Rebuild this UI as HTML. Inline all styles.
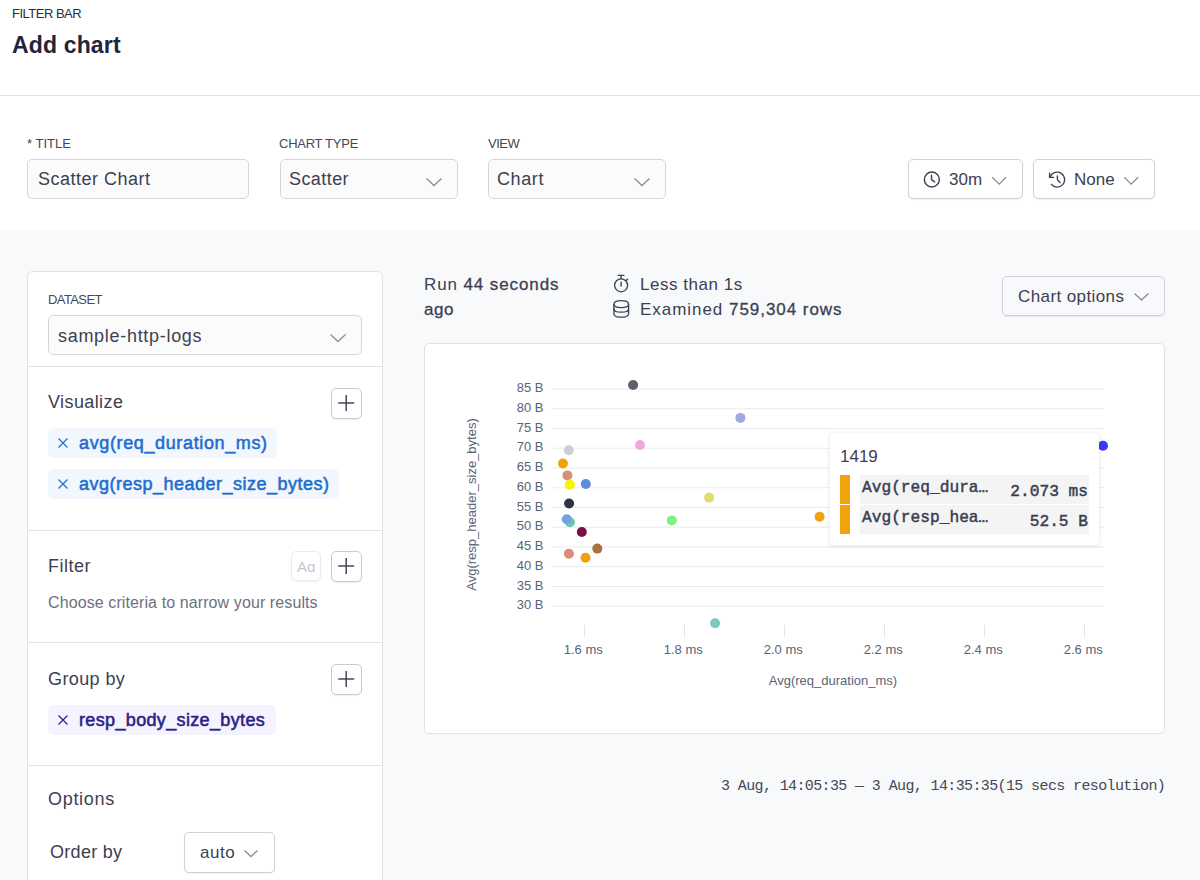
<!DOCTYPE html>
<html><head><meta charset="utf-8">
<style>
html,body{margin:0;padding:0;}
body{width:1200px;height:880px;overflow:hidden;position:relative;background:#fff;font-family:"Liberation Sans",sans-serif;color:#3d4051;}
.t{position:absolute;white-space:pre;line-height:1;}
.box{position:absolute;box-sizing:border-box;}
.inp{position:absolute;box-sizing:border-box;border:1px solid #d6d7dd;border-radius:5px;background:#fbfbfc;}
.btn{position:absolute;box-sizing:border-box;border:1px solid #cfd0d8;border-radius:5px;background:#fff;box-shadow:0 1px 1px rgba(20,20,40,0.06);}
.div{position:absolute;left:0;right:0;height:1px;background:#e3e4e8;}
.chev{position:absolute;}
.mono{font-family:"Liberation Mono",monospace;}
</style></head><body>

<!-- header -->
<div class="t" style="left:12px;top:7px;font-size:13px;letter-spacing:-0.5px;color:#2b2d3b;">FILTER BAR</div>
<div class="t" style="left:12px;top:34px;font-size:23px;font-weight:700;letter-spacing:0.15px;color:#22243a;">Add chart</div>
<div class="box" style="left:0;top:95px;width:1200px;height:1px;background:#e0e1e5;"></div>

<!-- form -->
<div class="t" style="left:27px;top:137px;font-size:13px;color:#454857;">* TITLE</div>
<div class="t" style="left:279px;top:137px;font-size:13px;letter-spacing:-0.26px;color:#454857;">CHART TYPE</div>
<div class="t" style="left:488px;top:137px;font-size:13px;letter-spacing:-0.5px;color:#454857;">VIEW</div>

<div class="inp" style="left:27px;top:159px;width:222px;height:40px;"></div>
<div class="t" style="left:38px;top:170px;font-size:18px;letter-spacing:0.5px;color:#3d4051;">Scatter Chart</div>

<div class="inp" style="left:280px;top:159px;width:178px;height:40px;"></div>
<div class="t" style="left:289px;top:170px;font-size:18px;letter-spacing:0.43px;color:#3d4051;">Scatter</div>
<svg class="chev" style="left:425px;top:177px" width="18" height="10" viewBox="0 0 18 10"><path d="M1.5 1.5 L9 8.5 L16.5 1.5" fill="none" stroke="#8b8d9b" stroke-width="1.3"/></svg>

<div class="inp" style="left:488px;top:159px;width:178px;height:40px;"></div>
<div class="t" style="left:497px;top:170px;font-size:18px;letter-spacing:0.6px;color:#3d4051;">Chart</div>
<svg class="chev" style="left:633px;top:177px" width="18" height="10" viewBox="0 0 18 10"><path d="M1.5 1.5 L9 8.5 L16.5 1.5" fill="none" stroke="#8b8d9b" stroke-width="1.3"/></svg>

<div class="btn" style="left:908px;top:159px;width:115px;height:40px;"></div>
<div class="t" style="left:949px;top:171px;font-size:17px;color:#3d4051;">30m</div>
<div class="btn" style="left:1033px;top:159px;width:122px;height:40px;"></div>
<div class="t" style="left:1074px;top:171px;font-size:17px;color:#3d4051;">None</div>




<!-- gray area -->
<div class="box" style="left:0;top:230px;width:1200px;height:650px;background:#f8f9fb;"></div>


<!-- left panel -->
<div class="box" style="left:27px;top:271px;width:356px;height:640px;background:#fff;border:1px solid #e1e2e7;border-radius:6px;"></div>
<div class="t" style="left:48px;top:293px;font-size:13px;letter-spacing:-0.6px;color:#454857;">DATASET</div>
<div class="inp" style="left:48px;top:315px;width:314px;height:40px;"></div>
<div class="t" style="left:58px;top:327px;font-size:18px;letter-spacing:0.7px;color:#3d4051;">sample-http-logs</div>
<svg class="chev" style="left:329px;top:333px" width="18" height="10" viewBox="0 0 18 10"><path d="M1.5 1.5 L9 8.5 L16.5 1.5" fill="none" stroke="#8b8d9b" stroke-width="1.3"/></svg>
<div class="box" style="left:28px;top:366px;width:354px;height:1px;background:#e3e4e8;"></div>

<div class="t" style="left:48px;top:393px;font-size:18px;letter-spacing:0.4px;color:#3d4051;">Visualize</div>
<div class="btn" style="left:331px;top:388px;width:31px;height:31px;border-color:#c9cad2;"></div>
<svg class="chev" style="left:331px;top:388px" width="31" height="31" viewBox="0 0 31 31"><path d="M15.2 7 V23 M7.2 15 H23.2" fill="none" stroke="#454858" stroke-width="1.5"/></svg>

<div class="box" style="left:48px;top:428px;width:229px;height:30px;background:#f2f6fd;border-radius:5px;"></div>
<svg class="chev" style="left:57px;top:437px" width="12" height="12" viewBox="0 0 12 12"><path d="M1.5 1.5 L10.5 10.5 M10.5 1.5 L1.5 10.5" fill="none" stroke="#1f6fd0" stroke-width="1.2"/></svg>
<div class="t" style="left:79px;top:434px;font-size:18px;font-weight:400;letter-spacing:0.63px;-webkit-text-stroke:0.55px #1d6ecf;color:#1d6ecf;">avg(req_duration_ms)</div>
<div class="box" style="left:48px;top:469px;width:291px;height:30px;background:#f2f6fd;border-radius:5px;"></div>
<svg class="chev" style="left:57px;top:478px" width="12" height="12" viewBox="0 0 12 12"><path d="M1.5 1.5 L10.5 10.5 M10.5 1.5 L1.5 10.5" fill="none" stroke="#1f6fd0" stroke-width="1.2"/></svg>
<div class="t" style="left:79px;top:475px;font-size:18px;font-weight:400;letter-spacing:0.49px;-webkit-text-stroke:0.55px #1d6ecf;color:#1d6ecf;">avg(resp_header_size_bytes)</div>
<div class="box" style="left:28px;top:530px;width:354px;height:1px;background:#e3e4e8;"></div>

<div class="t" style="left:48px;top:557px;font-size:18px;letter-spacing:0.5px;color:#3d4051;">Filter</div>
<div class="btn" style="left:291px;top:551px;width:30px;height:30px;border-color:#ececf0;"></div>
<div class="t" style="left:297px;top:559px;font-size:15px;color:#c5c7cf;">Aɑ</div>
<div class="btn" style="left:331px;top:551px;width:31px;height:31px;border-color:#c9cad2;"></div>
<svg class="chev" style="left:331px;top:551px" width="31" height="31" viewBox="0 0 31 31"><path d="M15.2 7 V23 M7.2 15 H23.2" fill="none" stroke="#454858" stroke-width="1.5"/></svg>
<div class="t" style="left:48px;top:595px;font-size:16px;letter-spacing:0.1px;color:#6d7080;">Choose criteria to narrow your results</div>
<div class="box" style="left:28px;top:642px;width:354px;height:1px;background:#e3e4e8;"></div>

<div class="t" style="left:48px;top:670px;font-size:18px;letter-spacing:0.4px;color:#3d4051;">Group by</div>
<div class="btn" style="left:331px;top:664px;width:31px;height:31px;border-color:#c9cad2;"></div>
<svg class="chev" style="left:331px;top:664px" width="31" height="31" viewBox="0 0 31 31"><path d="M15.2 7 V23 M7.2 15 H23.2" fill="none" stroke="#454858" stroke-width="1.5"/></svg>
<div class="box" style="left:48px;top:705px;width:228px;height:30px;background:#f5f3fd;border-radius:5px;"></div>
<svg class="chev" style="left:57px;top:714px" width="12" height="12" viewBox="0 0 12 12"><path d="M1.5 1.5 L10.5 10.5 M10.5 1.5 L1.5 10.5" fill="none" stroke="#2c2088" stroke-width="1.2"/></svg>
<div class="t" style="left:79px;top:711px;font-size:18px;font-weight:400;letter-spacing:0.35px;-webkit-text-stroke:0.55px #2c2088;color:#2c2088;">resp_body_size_bytes</div>
<div class="box" style="left:28px;top:765px;width:354px;height:1px;background:#e3e4e8;"></div>

<div class="t" style="left:48px;top:790px;font-size:18px;letter-spacing:0.7px;color:#3d4051;">Options</div>
<div class="t" style="left:50px;top:843px;font-size:18px;letter-spacing:0.3px;color:#3d4051;">Order by</div>
<div class="btn" style="left:184px;top:832px;width:91px;height:41px;"></div>
<div class="t" style="left:200px;top:844px;font-size:17px;letter-spacing:0.5px;color:#3d4051;">auto</div>
<svg class="chev" style="left:243px;top:849px" width="16" height="9" viewBox="0 0 16 9"><path d="M1.5 1.5 L8 7.5 L14.5 1.5" fill="none" stroke="#8b8d9b" stroke-width="1.3"/></svg>

<!-- run info -->
<div class="t" style="left:424px;top:276px;font-size:17px;letter-spacing:0.9px;color:#3d4051;">Run <span style="-webkit-text-stroke:0.3px #3d4051">44 seconds</span></div>
<div class="t" style="left:424px;top:301px;font-size:17px;letter-spacing:0.5px;color:#3d4051;-webkit-text-stroke:0.3px #3d4051;">ago</div>
<div class="t" style="left:640px;top:276px;font-size:17px;letter-spacing:0.54px;color:#3d4051;">Less than 1s</div>
<div class="t" style="left:640px;top:301px;font-size:17px;letter-spacing:0.96px;color:#3d4051;">Examined <span style="-webkit-text-stroke:0.3px #3d4051">759,304 rows</span></div>
<div class="btn" style="left:1002px;top:276px;width:163px;height:40px;background:transparent;"></div>
<div class="t" style="left:1018px;top:288px;font-size:17px;letter-spacing:0.4px;color:#3d4051;">Chart options</div>
<svg class="chev" style="left:1133px;top:292px" width="17" height="10" viewBox="0 0 17 10"><path d="M1.5 1.5 L8.5 8 L15.5 1.5" fill="none" stroke="#8b8d9b" stroke-width="1.3"/></svg>

<!-- chart box -->
<div class="box" style="left:424px;top:343px;width:741px;height:391px;background:#fff;border:1px solid #e1e2e7;border-radius:5px;"></div>


<svg style="position:absolute;left:424px;top:343px;" width="741" height="391" viewBox="424 343 741 391">
<line x1="551.5" y1="389.00" x2="1104" y2="389.00" stroke="#ebebee" stroke-width="1"/>
<line x1="551.5" y1="408.75" x2="1104" y2="408.75" stroke="#ebebee" stroke-width="1"/>
<line x1="551.5" y1="428.50" x2="1104" y2="428.50" stroke="#ebebee" stroke-width="1"/>
<line x1="551.5" y1="448.25" x2="1104" y2="448.25" stroke="#ebebee" stroke-width="1"/>
<line x1="551.5" y1="468.00" x2="1104" y2="468.00" stroke="#ebebee" stroke-width="1"/>
<line x1="551.5" y1="487.75" x2="1104" y2="487.75" stroke="#ebebee" stroke-width="1"/>
<line x1="551.5" y1="507.50" x2="1104" y2="507.50" stroke="#ebebee" stroke-width="1"/>
<line x1="551.5" y1="527.25" x2="1104" y2="527.25" stroke="#ebebee" stroke-width="1"/>
<line x1="551.5" y1="547.00" x2="1104" y2="547.00" stroke="#ebebee" stroke-width="1"/>
<line x1="551.5" y1="566.75" x2="1104" y2="566.75" stroke="#ebebee" stroke-width="1"/>
<line x1="551.5" y1="586.50" x2="1104" y2="586.50" stroke="#ebebee" stroke-width="1"/>
<line x1="551.5" y1="606.25" x2="1104" y2="606.25" stroke="#ebebee" stroke-width="1"/>

<g font-family="Liberation Sans" font-size="13" fill="#5b6375">
<text x="543.5" y="392.00" text-anchor="end">85 B</text>
<text x="543.5" y="411.75" text-anchor="end">80 B</text>
<text x="543.5" y="431.50" text-anchor="end">75 B</text>
<text x="543.5" y="451.25" text-anchor="end">70 B</text>
<text x="543.5" y="471.00" text-anchor="end">65 B</text>
<text x="543.5" y="490.75" text-anchor="end">60 B</text>
<text x="543.5" y="510.50" text-anchor="end">55 B</text>
<text x="543.5" y="530.25" text-anchor="end">50 B</text>
<text x="543.5" y="550.00" text-anchor="end">45 B</text>
<text x="543.5" y="569.75" text-anchor="end">40 B</text>
<text x="543.5" y="589.50" text-anchor="end">35 B</text>
<text x="543.5" y="609.25" text-anchor="end">30 B</text>

<text x="583.25" y="653.6" text-anchor="middle">1.6 ms</text>
<text x="683.25" y="653.6" text-anchor="middle">1.8 ms</text>
<text x="783.25" y="653.6" text-anchor="middle">2.0 ms</text>
<text x="883.25" y="653.6" text-anchor="middle">2.2 ms</text>
<text x="983.25" y="653.6" text-anchor="middle">2.4 ms</text>
<text x="1083.25" y="653.6" text-anchor="middle">2.6 ms</text>

<text x="833" y="685" text-anchor="middle">Avg(req_duration_ms)</text>
<text transform="translate(475.5 504.5) rotate(-90)" x="0" y="0" text-anchor="middle">Avg(resp_header_size_bytes)</text>
</g>
<line x1="584.5" y1="625" x2="584.5" y2="637" stroke="#e2e3e7" stroke-width="1"/>
<line x1="684.5" y1="625" x2="684.5" y2="637" stroke="#e2e3e7" stroke-width="1"/>
<line x1="784.5" y1="625" x2="784.5" y2="637" stroke="#e2e3e7" stroke-width="1"/>
<line x1="884.5" y1="625" x2="884.5" y2="637" stroke="#e2e3e7" stroke-width="1"/>
<line x1="984.5" y1="625" x2="984.5" y2="637" stroke="#e2e3e7" stroke-width="1"/>
<line x1="1084.5" y1="625" x2="1084.5" y2="637" stroke="#e2e3e7" stroke-width="1"/>

<circle cx="633.1" cy="385" r="5" fill="#5e5f6d"/>
<circle cx="740.4" cy="417.9" r="5" fill="#9eabe3"/>
<circle cx="640" cy="445" r="5" fill="#f2a7dc"/>
<circle cx="568.75" cy="450.2" r="5" fill="#c9cfd9"/>
<circle cx="562.95" cy="463.5" r="5" fill="#f0a30a"/>
<circle cx="567.4" cy="475.4" r="5" fill="#d9907a"/>
<circle cx="569.8" cy="484.65" r="5" fill="#f5f500"/>
<circle cx="585.8" cy="484" r="5" fill="#5b8fdc"/>
<circle cx="569.1" cy="503.5" r="5" fill="#2f3445"/>
<circle cx="570" cy="522.3" r="5" fill="#6cc4b4"/>
<circle cx="566.8" cy="519.3" r="5" fill="#70a3e1"/>
<circle cx="581.8" cy="532" r="5" fill="#7a1148"/>
<circle cx="568.9" cy="553.8" r="5" fill="#db8c7b"/>
<circle cx="585.5" cy="557.7" r="5" fill="#f1a00b"/>
<circle cx="597.3" cy="548.6" r="5" fill="#a9723f"/>
<circle cx="709.1" cy="497.6" r="5" fill="#e4da74"/>
<circle cx="671.8" cy="520.4" r="5" fill="#7ff180"/>
<circle cx="819.6" cy="516.7" r="5" fill="#f2a10c"/>
<circle cx="715.1" cy="623.3" r="5" fill="#7ccabf"/>
<circle cx="1103" cy="445.7" r="5" fill="#3b3bf6"/>

</svg>
<div class="box" style="left:830px;top:433px;width:269px;height:112px;background:#fff;border-radius:3px;box-shadow:0 1px 5px rgba(30,35,60,0.12);"></div>
<div class="t" style="left:840px;top:448px;font-size:17px;color:#3d4051;">1419</div>
<div class="box" style="left:840px;top:475px;width:10px;height:29px;background:#f2a20c;"></div>
<div class="box" style="left:840px;top:505px;width:10px;height:29px;background:#f2a20c;"></div>
<div class="box" style="left:860px;top:475px;width:229px;height:29px;background:#f4f4f5;"></div>
<div class="box" style="left:860px;top:505px;width:229px;height:29px;background:#f4f4f5;"></div>
<div class="t mono" style="left:862px;top:480px;font-size:16.2px;font-weight:400;-webkit-text-stroke:0.45px #3a3d4f;color:#3a3d4f;">Avg(req_dura…</div>
<div class="t mono" style="left:862px;top:510px;font-size:16.2px;font-weight:400;-webkit-text-stroke:0.45px #3a3d4f;color:#3a3d4f;">Avg(resp_hea…</div>
<div class="t mono" style="left:900px;top:484px;width:188px;text-align:right;font-size:16.2px;font-weight:400;-webkit-text-stroke:0.45px #3a3d4f;color:#3a3d4f;">2.073 ms</div>
<div class="t mono" style="left:900px;top:514px;width:188px;text-align:right;font-size:16.2px;font-weight:400;-webkit-text-stroke:0.45px #3a3d4f;color:#3a3d4f;">52.5 B</div>

<div class="t mono" style="left:721px;top:779px;font-size:15px;letter-spacing:-0.62px;color:#454857;">3 Aug, 14:05:35 — 3 Aug, 14:35:35(15 secs resolution)</div>

<svg style="position:absolute;left:0;top:0;overflow:visible" width="1" height="1">
<g fill="none" stroke="#3d4051" stroke-width="1.4" stroke-linecap="round" stroke-linejoin="round">
<circle cx="931.85" cy="179.5" r="7.5"/>
<path d="M931.5 175.2 V179.6 L934.7 181.8"/>
<path d="M1051.4 184.4 A7.5 7.5 0 1 0 1050.4 176.4"/>
<path d="M1049.6 173.2 V177.4 H1053.6"/>
<path d="M1057.4 176 V179.6 L1060 182.5"/>
<path d="M618.2 275.4 H623.9 M621.1 275.4 V278.4 M626.2 280.4 L627.6 279.2"/>
<circle cx="621.1" cy="285.3" r="6.5" stroke-width="1.3"/>
<path d="M621.1 282.1 V286.1"/>
<path d="M613.9 304.5 C613.9 301.6 617.6 300.7 621.25 300.7 C624.9 300.7 628.6 301.6 628.6 304.5 V313.7 C628.6 316.3 625 317.2 621.25 317.2 C617.5 317.2 613.9 316.3 613.9 313.7 Z" stroke-width="1.3"/>
<path d="M613.9 304.3 C613.9 306.8 617.5 307.7 621.25 307.7 C625 307.7 628.6 306.8 628.6 304.3 M613.9 309 C613.9 311.4 617.5 312.2 621.25 312.2 C625 312.2 628.6 311.4 628.6 309" stroke-width="1.3"/>
</g>
<g fill="none" stroke="#8b8d9b" stroke-width="1.3">
<path d="M992.3 177.3 L999.2 184.1 L1006.1 177.3"/>
<path d="M1124.3 177.3 L1131.2 184.1 L1138.1 177.3"/>
</g>
</svg>
</body></html>
